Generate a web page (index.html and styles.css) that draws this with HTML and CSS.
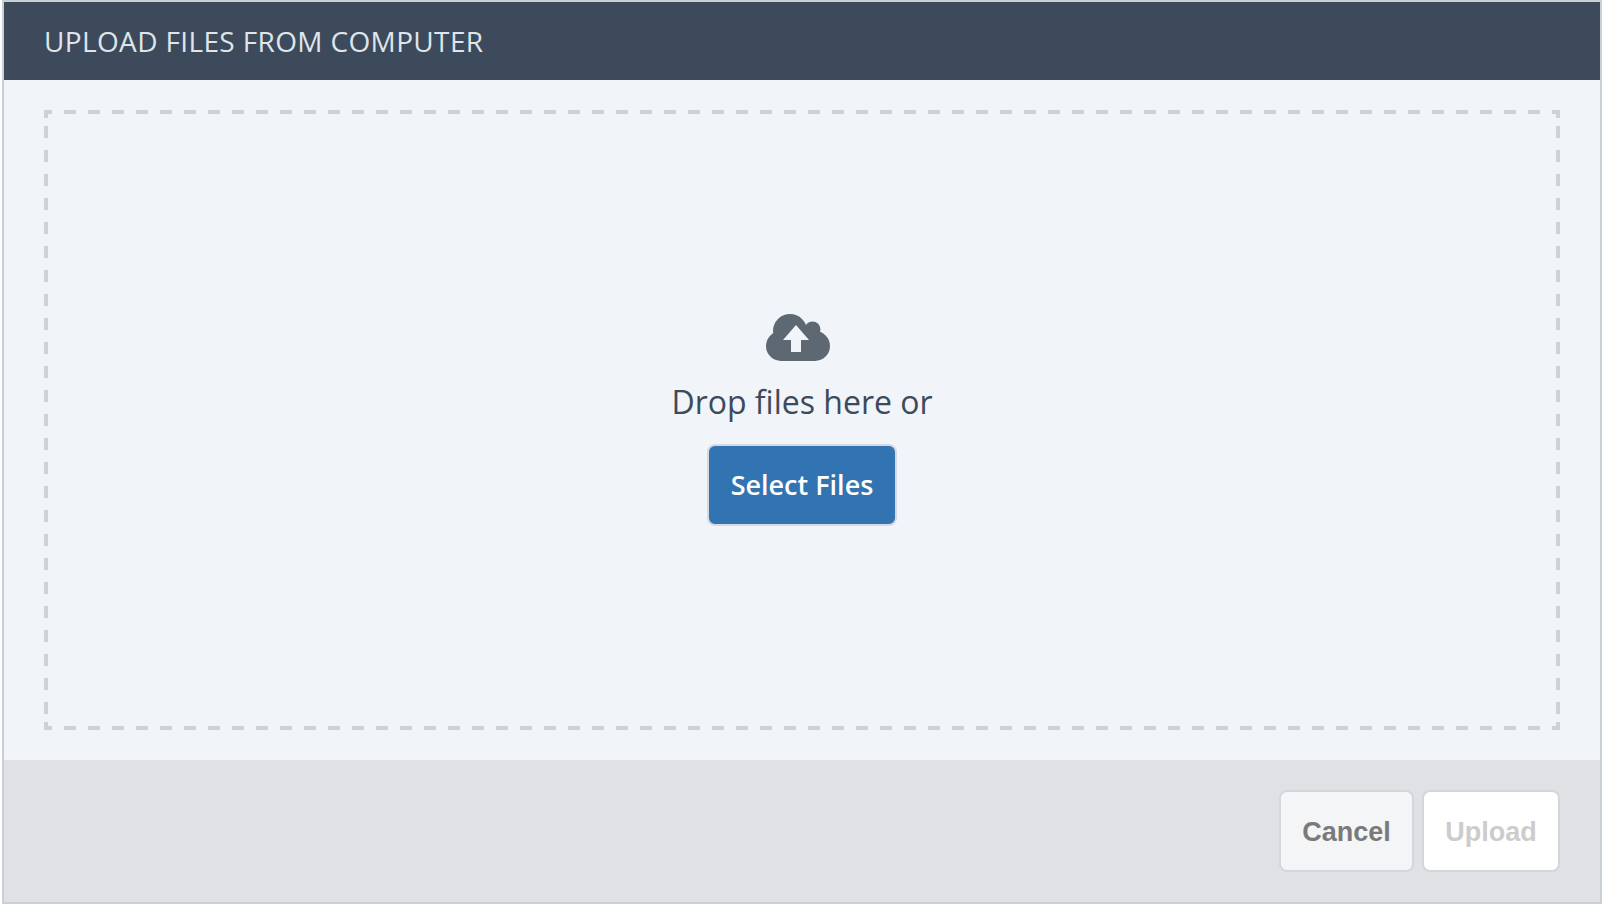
FILE: index.html
```html
<!DOCTYPE html>
<html lang="en">
<head>
    <meta charset="UTF-8">
    <title>Upload files from computer</title>
    <link rel="stylesheet" href="styles.css">
</head>
<body>
    <div class="modal">
        <div class="modal-header">UPLOAD FILES FROM COMPUTER</div>
        <div class="modal-body">
            <div class="dropzone">
                <svg class="cloud-icon" viewBox="0 0 64 47" width="64" height="47" aria-hidden="true">
                    <g fill="#5e6873">
                        <circle cx="24" cy="17" r="17"/>
                        <circle cx="46.5" cy="15.5" r="8"/>
                        <circle cx="15" cy="32" r="15"/>
                        <circle cx="49" cy="32" r="15"/>
                        <rect x="15" y="17" width="34" height="30"/>
                    </g>
                    <path fill="#f1f4f9" d="M30 11 L43 26 H35 V38 H25 V26 H17 Z"/>
                </svg>
                <div class="drop-text">Drop files here or</div>
                <button class="select-btn">Select Files</button>
            </div>
        </div>
        <div class="modal-footer">
            <button class="footer-btn cancel-btn">Cancel</button>
            <button class="footer-btn upload-btn">Upload</button>
        </div>
    </div>
</body>
</html>
```

FILE: styles.css
```css
body {
    margin: 0;
    background: white;
    font-family: "Open Sans", sans-serif;
}
.modal {
    margin: 0 2px;
    width: 1596px;
    border: 2px solid #c8d0d6;
}
.modal-header {
    height: 78px;
    padding-left: 40px;
    display: flex;
    align-items: center;
    background: #3c4a5b;
    color: #dfe5ea;
    font-size: 28px;
    letter-spacing: 0.36px;
}
.modal-body {
    padding: 30px 40px;
    background: #f1f4f9;
}
/* the dashes do not fit a css dashed border, corners are shorter */
.dropzone {
    --dash: #ccd2d6;
    height: 620px;
    display: flex;
    flex-direction: column;
    align-items: center;
    justify-content: center;
    background-image:
        linear-gradient(var(--dash), var(--dash)),
        linear-gradient(var(--dash), var(--dash)),
        linear-gradient(var(--dash), var(--dash)),
        linear-gradient(var(--dash), var(--dash)),
        linear-gradient(90deg, var(--dash) 12px, transparent 12px),
        linear-gradient(90deg, var(--dash) 12px, transparent 12px),
        linear-gradient(var(--dash) 12px, transparent 12px),
        linear-gradient(var(--dash) 12px, transparent 12px);
    background-size:
        4px 8px, 4px 8px, 4px 8px, 4px 8px,
        24px 4px, 24px 4px, 4px 24px, 4px 24px;
    background-position:
        left top, right top, left bottom, right bottom,
        20px top, 20px bottom, left 16px, right 16px;
    background-repeat:
        no-repeat, no-repeat, no-repeat, no-repeat,
        repeat-x, repeat-x, repeat-y, repeat-y;
}
.cloud-icon {
    display: block;
    margin-right: 8px;
}
.drop-text {
    margin-top: 19px;
    margin-bottom: 20px;
    color: #3c4a5b;
    font-size: 32px;
    line-height: 44px;
}
.select-btn {
    width: 190px;
    height: 82px;
    padding: 0 0 2px;
    background: #3273b1;
    border: 2px solid #d5dae2;
    border-radius: 8px;
    color: white;
    font-family: inherit;
    font-size: 27px;
    font-weight: 600;
}
.modal-footer {
    height: 142px;
    box-sizing: border-box;
    padding: 30px 40px;
    display: flex;
    justify-content: flex-end;
    gap: 8px;
    background: #e0e1e5;
}
.footer-btn {
    height: 82px;
    padding: 2px 0 0;
    border: 2px solid #d3d6dc;
    border-radius: 8px;
    font-family: "Liberation Sans", Arial, sans-serif;
    font-size: 27px;
    font-weight: bold;
}
.cancel-btn {
    width: 135px;
    background: #f4f5f7;
    color: #7a7a7a;
}
.upload-btn {
    width: 138px;
    background: white;
    color: #cccccc;
}
```
